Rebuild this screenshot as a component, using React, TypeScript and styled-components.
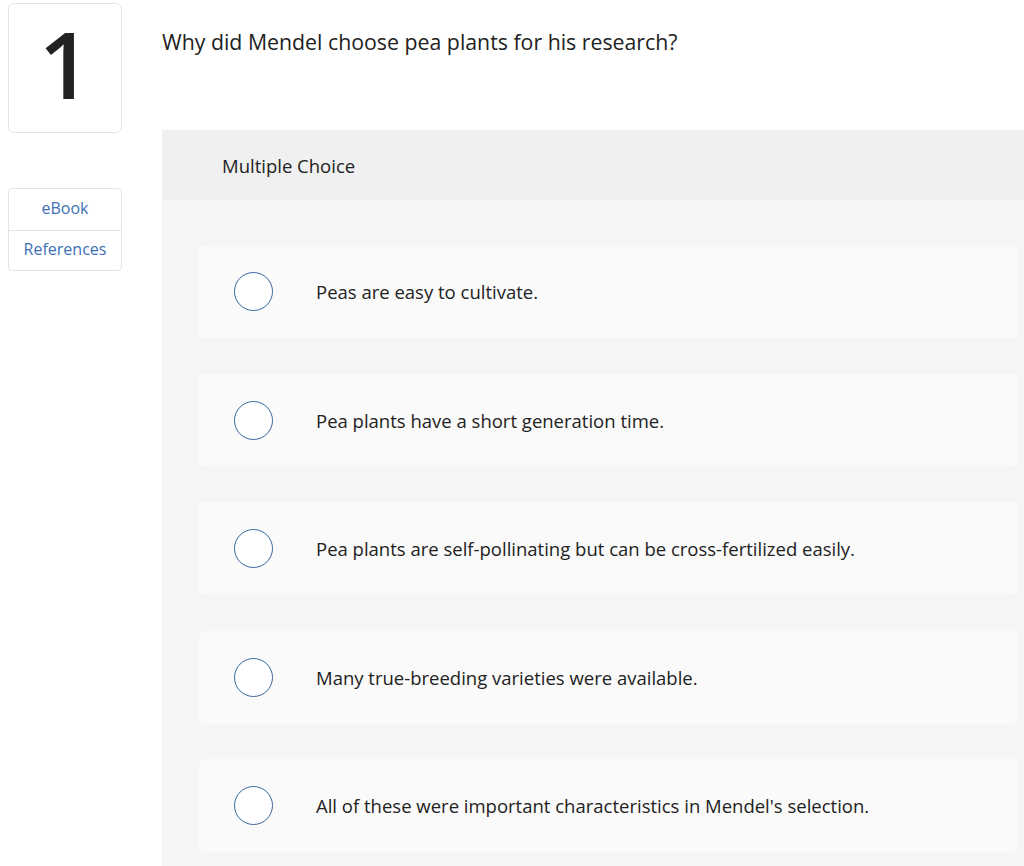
import React from 'react';
import styled, { createGlobalStyle } from 'styled-components';

const GlobalStyle = createGlobalStyle`
  html, body {
    margin: 0;
    padding: 0;
    background: #fff;
    overflow: hidden;
  }
  body {
    font-family: "Open Sans", Lato, sans-serif;
    color: #222;
  }
`;

const Page = styled.div`
  display: flex;
  align-items: flex-start;
  gap: 40px;
  padding: 3px 0 0 8px;
`;

const Sidebar = styled.aside`
  width: 114px;
  flex-shrink: 0;
  display: flex;
  flex-direction: column;
  gap: 55px;
`;

const NumberBox = styled.div`
  height: 130px;
  border: 1px solid #e4e4e4;
  border-radius: 6px;
  display: flex;
  align-items: center;
  justify-content: center;
  font-size: 92px;
  font-weight: 600;
  color: #222;
  line-height: 1;
  padding-bottom: 8px;
  box-sizing: border-box;
`;

const Links = styled.div`
  border: 1px solid #e4e4e4;
  border-radius: 4px;
  display: flex;
  flex-direction: column;
`;

const LinkItem = styled.a<{ $first?: boolean }>`
  height: 40.5px;
  display: flex;
  align-items: center;
  justify-content: center;
  padding-bottom: 2px;
  box-sizing: border-box;
  font-size: 16px;
  color: #3e70b3;
  text-decoration: none;
  border-top: ${p => (p.$first ? 'none' : '1px solid #e4e4e4')};
`;

const Main = styled.main`
  flex: 1;
  display: flex;
  flex-direction: column;
`;

const Question = styled.h1`
  margin: 0;
  height: 127px;
  padding-top: 24px;
  box-sizing: border-box;
  font-size: 21.3px;
  font-weight: 400;
  color: #222;
`;

const Panel = styled.section`
  background: #f5f5f5;
`;

const PanelHeader = styled.div`
  height: 70px;
  background: #f0f0f0;
  display: flex;
  align-items: center;
  padding-left: 60px;
  font-size: 18.5px;
  color: #222;
`;

const Options = styled.div`
  display: flex;
  flex-direction: column;
  gap: 35.5px;
  padding: 45px 6px 15px 37px;
`;

const Option = styled.label`
  height: 93px;
  background: #fafafa;
  border-radius: 5px;
  display: flex;
  align-items: center;
  padding-left: 35px;
  gap: 43px;
  font-size: 18.5px;
  color: #222;
  cursor: pointer;
`;

const Radio = styled.span`
  width: 39px;
  height: 39px;
  box-sizing: border-box;
  border: 1.6px solid #3a679e;
  border-radius: 50%;
  background: #fff;
  flex-shrink: 0;
`;

const choices = [
  'Peas are easy to cultivate.',
  'Pea plants have a short generation time.',
  'Pea plants are self-pollinating but can be cross-fertilized easily.',
  'Many true-breeding varieties were available.',
  "All of these were important characteristics in Mendel's selection.",
];

const App: React.FC = () => (
  <>
    <GlobalStyle />
    <Page>
      <Sidebar>
        <NumberBox>1</NumberBox>
        <Links>
          <LinkItem $first href="#">eBook</LinkItem>
          <LinkItem href="#">References</LinkItem>
        </Links>
      </Sidebar>
      <Main>
        <Question>Why did Mendel choose pea plants for his research?</Question>
        <Panel>
          <PanelHeader>Multiple Choice</PanelHeader>
          <Options>
            {choices.map(c => (
              <Option key={c}>
                <Radio />
                {c}
              </Option>
            ))}
          </Options>
        </Panel>
      </Main>
    </Page>
  </>
);

export default App;
